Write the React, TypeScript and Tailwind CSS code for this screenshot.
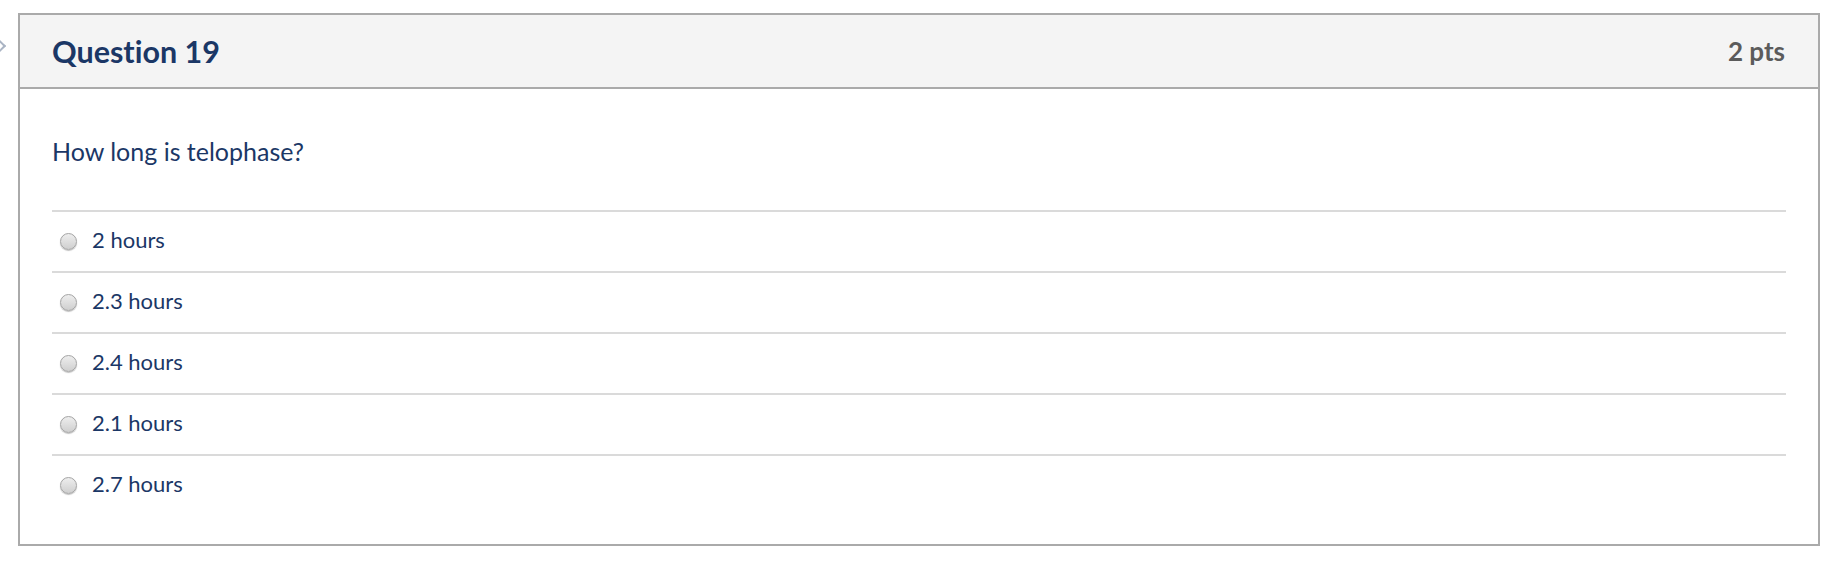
import React from "react";

const answers = ["2 hours", "2.3 hours", "2.4 hours", "2.1 hours", "2.7 hours"];

function Radio() {
  return (
    <span className="inline-block w-[17px] h-[17px] rounded-full border border-[#a4a4a4] bg-gradient-to-b from-[#eeeeee] to-[#cfcfcf] shadow-[0_1px_1px_rgba(0,0,0,0.25)] shrink-0 mt-[3px]" />
  );
}

export default function App() {
  return (
    <div
      className="relative w-full h-[566px] bg-white overflow-hidden [font-variant-ligatures:none]"
      style={{ fontFamily: "Lato, 'Open Sans', 'Liberation Sans', sans-serif" }}
    >
      <div className="absolute left-[-6px] top-[41px] w-[10px] h-[10px] rotate-45 border-t-2 border-r-2 border-[#aab4c4]" />
      <div className="ml-[18px] mt-[13px] w-[1802px] border-2 border-[#aaaaaa]">
        <div className="h-[74px] bg-[#f4f4f4] border-b-2 border-[#aaaaaa] flex items-center justify-between pl-[32px] pr-[33px]">
          <h2 className="text-[30.5px] font-bold text-[#1b3766] leading-none">Question 19</h2>
          <div className="text-[26px] font-bold text-[#5b5b5b] leading-none">2 pts</div>
        </div>
        <div className="px-[32px] pt-[44px] pb-[29px]">
          <p className="text-[25px] text-[#1b3766] leading-[36px]">How long is telophase?</p>
          <div className="mt-[41px]">
            {answers.map((a) => (
              <div
                key={a}
                className="h-[61px] border-t-2 border-[#dadada] flex items-center pl-[8px] gap-[15px] pb-[3px]"
              >
                <Radio />
                <span className="text-[22px] text-[#1b3766] leading-none">{a}</span>
              </div>
            ))}
          </div>
        </div>
      </div>
    </div>
  );
}
